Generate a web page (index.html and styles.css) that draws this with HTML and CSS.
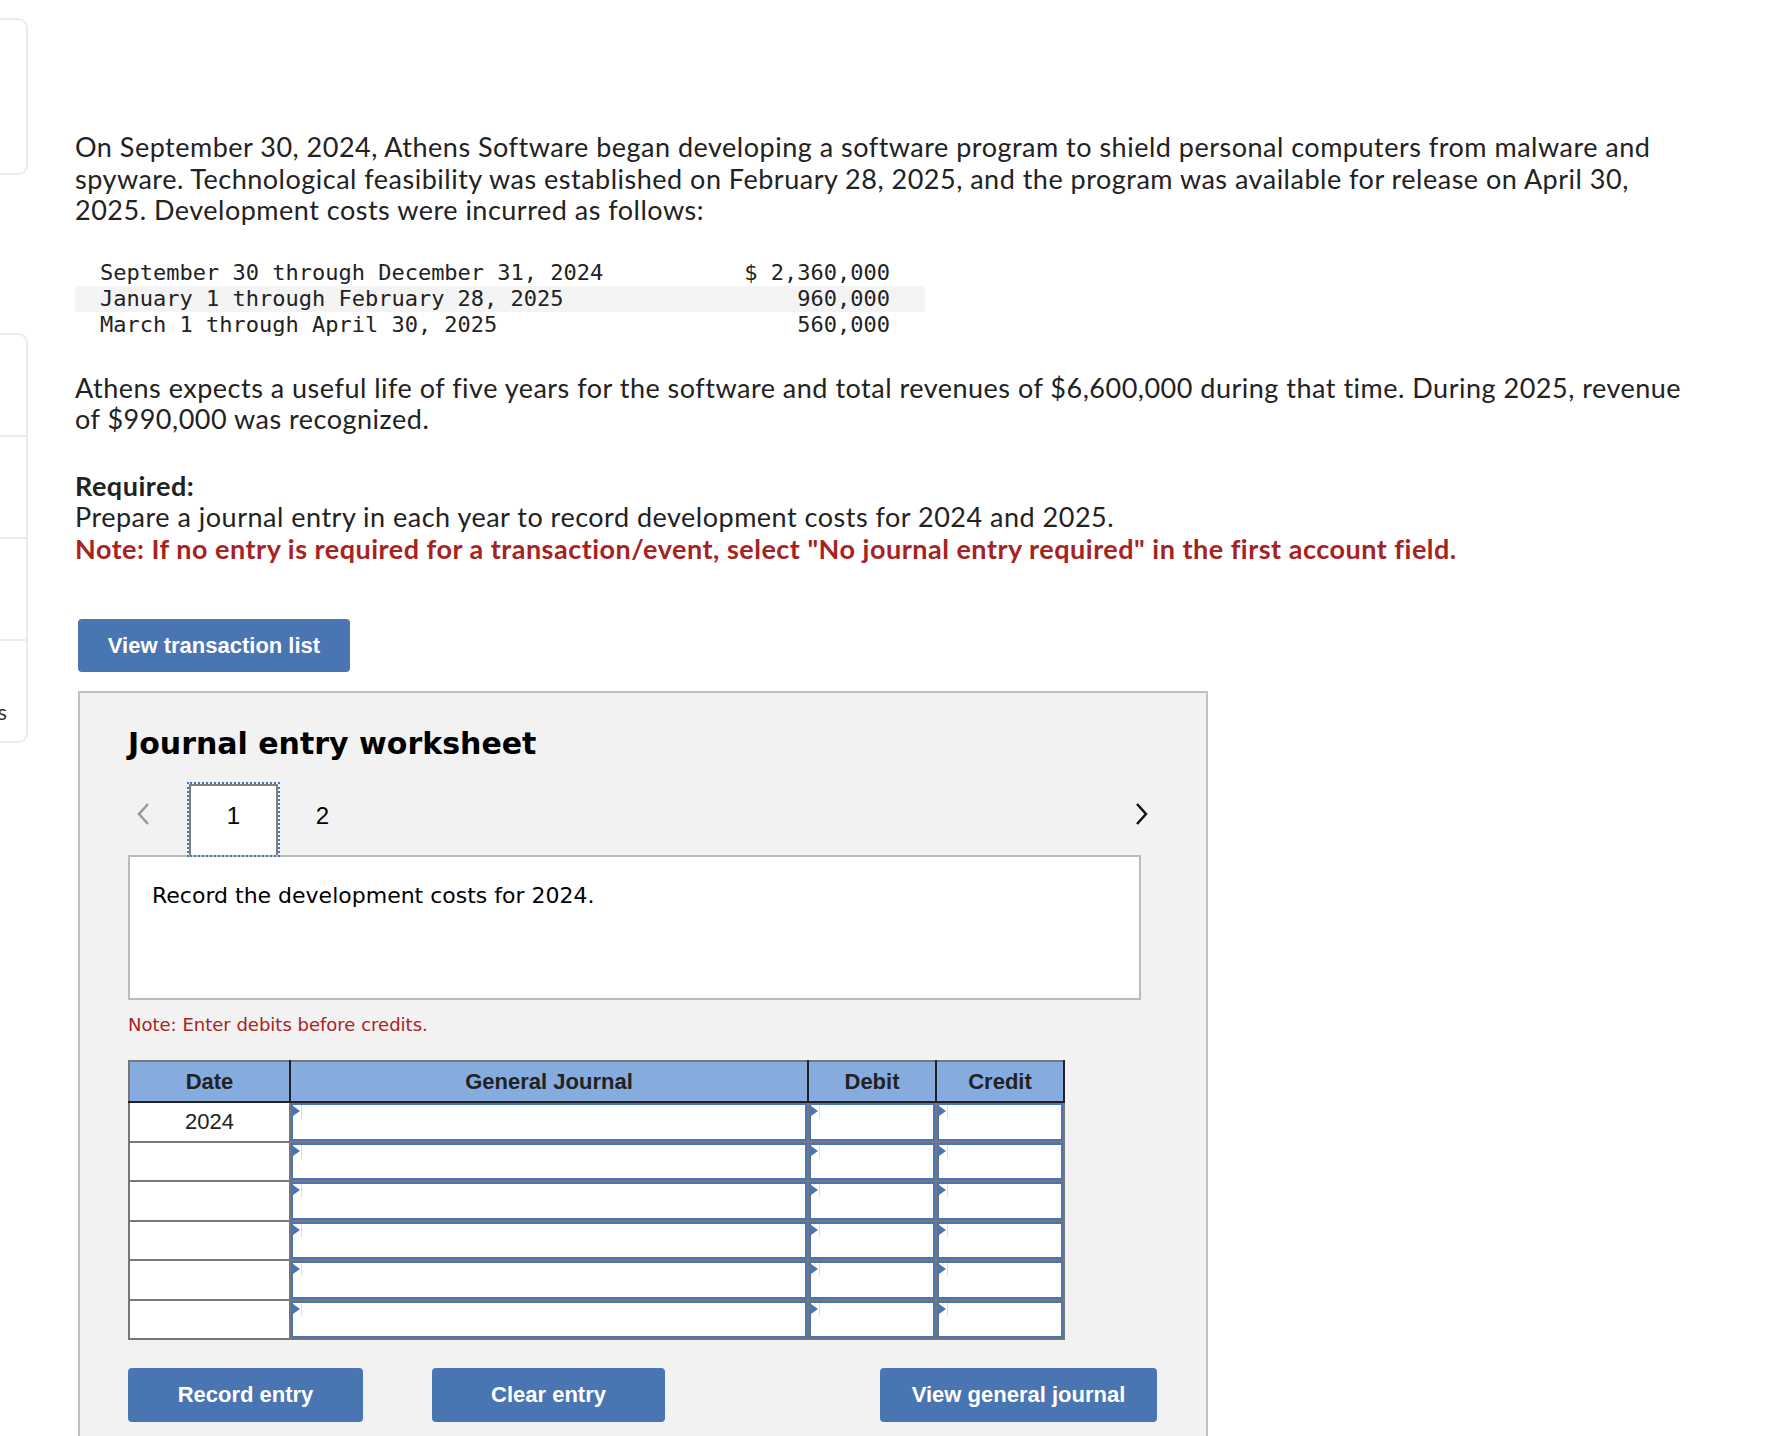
FILE: index.html
```html
<!DOCTYPE html>
<html>
  <head>
    <meta charset="utf-8">
    <meta name="viewport" content="width=device-width, initial-scale=1.0">

    <title>Journal Entry Worksheet</title>

    <link rel="stylesheet" href="styles.css">
  </head>

  <body>
    <div class="page">
      <!-- Question rail, scrolled mostly out of view on the left -->
      <nav class="rail">
        <div class="rail-inner">
          <div class="rail-card"></div>
          <div class="rail-group">
            <div class="rail-item"></div>
            <div class="rail-item"></div>
            <div class="rail-item"></div>
            <div class="rail-item"><span class="rail-label">References</span></div>
          </div>
        </div>
      </nav>

      <main class="question">
        <p class="lead">On September 30, 2024, Athens Software began developing a software program to shield personal computers from malware and spyware. Technological feasibility was established on February 28, 2025, and the program was available for release on April 30, 2025. Development costs were incurred as follows:</p>

        <!-- Development cost schedule -->
        <table class="costs">
          <tr>
            <td>September 30 through December 31, 2024</td>
            <td class="amt">$ 2,360,000</td>
          </tr>
          <tr class="shaded">
            <td>January 1 through February 28, 2025</td>
            <td class="amt">960,000</td>
          </tr>
          <tr>
            <td>March 1 through April 30, 2025</td>
            <td class="amt">560,000</td>
          </tr>
        </table>

        <p class="lead">Athens expects a useful life of five years for the software and total revenues of $6,600,000 during that time. During 2025, revenue of $990,000 was recognized.</p>

        <div class="required">
          <strong>Required:</strong><br>
          Prepare a journal entry in each year to record development costs for 2024 and 2025.<br>
          <span class="note">Note: If no entry is required for a transaction/event, select "No journal entry required" in the first account field.</span>
        </div>

        <button class="btn btn-list">View transaction list</button>

        <!-- Journal entry worksheet -->
        <section class="worksheet">
          <h2>Journal entry worksheet</h2>

          <div class="tabs">
            <span class="tab-arrow tab-prev">
              <svg width="16" height="24" viewBox="0 0 16 24"><path d="M13 2 L4 12 L13 22" fill="none" stroke="#999" stroke-width="2.5"/></svg>
            </span>
            <span class="tab active">1</span>
            <span class="tab">2</span>
            <span class="tab-arrow tab-next">
              <svg width="16" height="24" viewBox="0 0 16 24"><path d="M3 2 L12 12 L3 22" fill="none" stroke="#111" stroke-width="2.5"/></svg>
            </span>
          </div>

          <div class="prompt">Record the development costs for 2024.</div>

          <p class="entry-note">Note: Enter debits before credits.</p>

          <table class="journal">
            <colgroup>
              <col class="col-date">
              <col class="col-account">
              <col class="col-money">
              <col class="col-money">
            </colgroup>
            <thead>
              <tr>
                <th>Date</th>
                <th>General Journal</th>
                <th>Debit</th>
                <th>Credit</th>
              </tr>
            </thead>
            <tbody>
              <tr>
                <td class="date">2024</td>
                <td><span class="field"><input type="text"></span></td>
                <td><span class="field"><input type="text"></span></td>
                <td><span class="field"><input type="text"></span></td>
              </tr>
              <tr>
                <td class="date"></td>
                <td><span class="field"><input type="text"></span></td>
                <td><span class="field"><input type="text"></span></td>
                <td><span class="field"><input type="text"></span></td>
              </tr>
              <tr>
                <td class="date"></td>
                <td><span class="field"><input type="text"></span></td>
                <td><span class="field"><input type="text"></span></td>
                <td><span class="field"><input type="text"></span></td>
              </tr>
              <tr>
                <td class="date"></td>
                <td><span class="field"><input type="text"></span></td>
                <td><span class="field"><input type="text"></span></td>
                <td><span class="field"><input type="text"></span></td>
              </tr>
              <tr>
                <td class="date"></td>
                <td><span class="field"><input type="text"></span></td>
                <td><span class="field"><input type="text"></span></td>
                <td><span class="field"><input type="text"></span></td>
              </tr>
              <tr>
                <td class="date"></td>
                <td><span class="field"><input type="text"></span></td>
                <td><span class="field"><input type="text"></span></td>
                <td><span class="field"><input type="text"></span></td>
              </tr>
            </tbody>
          </table>

          <div class="actions">
            <button class="btn btn-record">Record entry</button>
            <button class="btn btn-clear">Clear entry</button>
            <button class="btn btn-journal">View general journal</button>
          </div>
        </section>
      </main>
    </div>
  </body>
</html>
```

FILE: styles.css
```css
/* Basic reset and page text */
body {
  margin: 0;
  padding: 0;
  font-family: Lato, "Liberation Sans", sans-serif;
  color: #222;
  background: #fff;
}
.page {
  display: flex;
  align-items: flex-start;
}

/* Left rail: only its right edge shows */
.rail {
  flex: none;
  width: 28px;
  overflow: hidden;
}
.rail-inner {
  width: 240px;
  margin-left: -212px;
  padding-top: 18px;
}
.rail-card,
.rail-group {
  box-sizing: border-box;
  border: 2px solid #ebebeb;
  border-radius: 10px;
}
.rail-card {
  height: 157px;
}
.rail-group {
  margin-top: 158px;
}
.rail-item {
  height: 100px;
  border-bottom: 2px solid #ebebeb;
}
.rail-item:last-child {
  border-bottom: none;
}
.rail-label {
  display: block;
  padding: 57px 19px 0 0;
  text-align: right;
  font-size: 22px;
  color: #333;
}

/* Question text */
.question {
  flex: 1;
  padding: 131px 73px 0 47px;
  font-size: 27px;
  letter-spacing: 0.5px;
  font-variant-ligatures: none;
}
.lead {
  margin: 0;
  line-height: 31.5px;
}
.costs {
  width: 850px;
  margin: 34px 0;
  border-collapse: collapse;
  font-family: "DejaVu Sans Mono", monospace;
  font-size: 22px;
  letter-spacing: normal;
  color: #222;
}
.costs td {
  padding: 0;
  height: 26px;
  line-height: 26px;
  white-space: pre;
}
.costs td:first-child {
  padding-left: 25px;
}
.costs .amt {
  text-align: right;
  padding-right: 35px;
}
.costs .shaded td {
  background: #f4f4f4;
}
.required {
  margin-top: 35px;
  line-height: 31.5px;
}
.required .note {
  font-weight: bold;
  color: #a8221f;
}

/* Buttons */
.btn {
  display: block;
  height: 53px;
  padding: 0;
  border: none;
  border-radius: 4px;
  background: #4a75b3;
  color: #fff;
  font-family: "Liberation Sans", Arial, sans-serif;
  font-weight: bold;
  font-size: 22px;
  letter-spacing: normal;
  cursor: pointer;
}
.btn-list {
  width: 272px;
  margin: 55px 0 0 3px;
}

/* Worksheet panel */
.worksheet {
  box-sizing: border-box;
  width: 1130px;
  margin: 19px 0 0 3px;
  padding: 33px 49px 40px 48px;
  border: 2px solid #c0c0c0;
  background: #f2f2f2;
  letter-spacing: normal;
}
.worksheet h2 {
  margin: 0;
  font-family: "DejaVu Sans", Verdana, sans-serif;
  font-size: 30px;
  line-height: 36px;
  color: #000;
}

/* Step tabs */
.tabs {
  display: flex;
  align-items: flex-start;
  width: 1022px;
  margin-top: 22px;
}
.tab-arrow {
  display: block;
  height: 24px;
  margin-top: 15px;
}
.tab-prev {
  margin-left: 7px;
  margin-right: 38px;
}
.tab-next {
  margin-left: auto;
}
.tab {
  box-sizing: border-box;
  width: 89px;
  height: 71px;
  padding-top: 16px;
  border: 2px solid transparent;
  border-bottom: none;
  text-align: center;
  font-family: "Liberation Sans", Arial, sans-serif;
  font-size: 24px;
  line-height: 28px;
  color: #000;
}
.tab.active {
  border-color: #808080;
  background: #fff;
  outline: 2px dotted #4a74b4;
}

.prompt {
  box-sizing: border-box;
  width: 1013px;
  height: 145px;
  padding: 26px 22px 22px;
  border: 2px solid #bbb;
  background: #fff;
  font-family: "DejaVu Sans", Verdana, sans-serif;
  font-size: 22px;
  color: #000;
}
.entry-note {
  margin: 14px 0 0;
  font-family: "DejaVu Sans", Verdana, sans-serif;
  font-size: 18px;
  line-height: 21px;
  color: #a8221f;
}

/* Journal grid */
.journal {
  width: 935px;
  margin-top: 25px;
  border-collapse: collapse;
  table-layout: fixed;
  font-family: "Liberation Sans", Arial, sans-serif;
  color: #222;
}
.col-date { width: 161px; }
.col-account { width: 518px; }
.col-money { width: 128px; }
.journal th {
  height: 39px;
  padding: 0;
  background: #85abdf;
  font-size: 22px;
  font-weight: bold;
  border-top: 2px solid #777;
  border-right: 2px solid #222;
  border-bottom: 2px solid #222;
}
.journal th:first-child {
  border-left: 2px solid #777;
}
.journal td {
  padding: 0;
  border: 2px solid #777;
  background: #fff;
  vertical-align: top;
}
.journal td.date {
  vertical-align: middle;
  text-align: center;
  font-size: 22px;
}
.field {
  position: relative;
  display: block;
}
.field input {
  display: block;
  box-sizing: border-box;
  width: 100%;
  height: 37.5px;
  margin: 0;
  padding: 0 12px;
  border: 2px solid #4a74b4;
  background: #fff;
  font-size: 20px;
}
/* dropdown marker in the corner of each field */
.field::before {
  content: "";
  position: absolute;
  left: 2px;
  top: 3px;
  border-top: 5px solid transparent;
  border-bottom: 5px solid transparent;
  border-left: 7px solid #4a74b4;
}
.field::after {
  content: "";
  position: absolute;
  left: 10px;
  top: 2px;
  width: 1px;
  height: 13px;
  background: #d4deec;
}

/* Bottom action buttons */
.actions {
  display: flex;
  margin-top: 28px;
}
.actions .btn {
  height: 54px;
}
.btn-record {
  width: 235px;
}
.btn-clear {
  width: 233px;
  margin-left: 69px;
}
.btn-journal {
  width: 277px;
  margin-left: auto;
}
```
